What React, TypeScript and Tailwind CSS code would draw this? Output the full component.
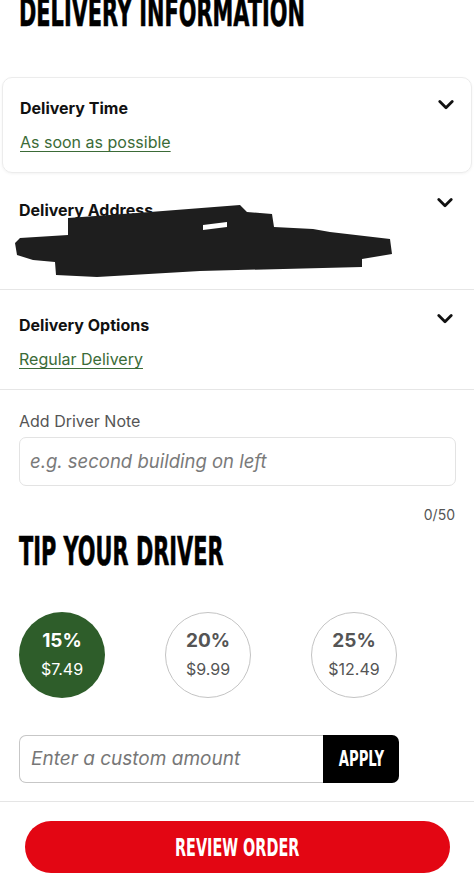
import React from "react";

const condensed = "font-['Liberation_Sans_Narrow','DejaVu_Sans_Condensed','Arial_Narrow',sans-serif]";

function Chevron() {
  return (
    <svg width="16" height="16" viewBox="0 0 16 16" className="shrink-0">
      <path d="M1.8 4.6 L8 10.8 L14.2 4.6" fill="none" stroke="#111" strokeWidth="2.8" strokeLinecap="round" strokeLinejoin="round" />
    </svg>
  );
}

function Tip({ pct, amt, active }: { pct: string; amt: string; active?: boolean }) {
  return (
    <div
      className={
        "w-[86px] h-[86px] rounded-full flex flex-col items-center justify-center gap-[4px] " +
        (active ? "bg-[#2e5d2a] text-white" : "border border-[#c4c4c4] text-[#555]")
      }
    >
      <div className="text-[19px] leading-[24px] font-bold">{pct}</div>
      <div className="text-[16px] leading-[24px]">{amt}</div>
    </div>
  );
}

export default function App() {
  return (
    <div className="w-[474px] h-[874px] overflow-hidden bg-white text-[#111] font-['Inter',sans-serif]">
      <h1 className={`${condensed} px-[19px] mt-[-7px] text-[39px] leading-[39px] font-bold text-black whitespace-nowrap [-webkit-text-stroke:0.6px_black]`}>
        <span className="inline-block origin-left scale-x-[0.595]">DELIVERY INFORMATION</span>
      </h1>

      <div className="mt-[45px] mx-[2px] rounded-[10px] border border-[#ececec] shadow-[0_1px_3px_rgba(0,0,0,0.05)] px-[17px] pt-[18px] pb-[18px]">
        <div className="flex justify-between items-start">
          <div className="text-[16px] leading-[24px] font-bold">Delivery Time</div>
          <div className="mt-[1px]"><Chevron /></div>
        </div>
        <div className="mt-[10px] text-[16px] leading-[24px] text-[#3b6b37] underline underline-offset-[3px]">As soon as possible</div>
      </div>

      <div className="relative px-[19px] pt-[25px] border-b border-[#e6e6e6]">
        <div className="flex justify-between items-start">
          <div className="text-[16px] leading-[24px] font-bold">Delivery Address</div>
          <div className="mt-[-3px] mr-[2px]"><Chevron /></div>
        </div>
        <div className="h-[67px]" />
        <svg className="absolute left-0 top-0" width="474" height="117" viewBox="0 173 474 117">
          <path
            d="M68 218 L150 212 L240 205 L247 212 L272 214 L274 227 L313 229 L330 232 L390 239 L392 254 L362 259 L362 267 L200 271 L97 277 L56 275 L55 262 L33 260 L17 255 L15 243 L20 238 L68 235 Z"
            fill="#1e1e1e"
          />
          <path d="M203 225 L227 222 L227 227 L203 230 Z" fill="#fff" />
        </svg>
      </div>

      <div className="px-[19px] pt-[23px] pb-[18px] border-b border-[#e6e6e6]">
        <div className="flex justify-between items-start">
          <div className="text-[16px] leading-[24px] font-bold">Delivery Options</div>
          <div className="mt-[-2px] mr-[2px]"><Chevron /></div>
        </div>
        <div className="mt-[10px] text-[16px] leading-[24px] text-[#3b6b37] underline underline-offset-[3px]">Regular Delivery</div>
      </div>

      <div className="px-[19px] mt-[19px] text-[16px] leading-[24px] text-[#555]">Add Driver Note</div>
      <div className="mx-[19px] mt-[4px] h-[49px] w-[437px] rounded-[7px] border border-[#e3e3e3] flex items-center pl-[10px]">
        <span className="italic text-[18.5px] text-[#7a7a7a]">e.g. second building on left</span>
      </div>
      <div className="mt-[19px] pr-[19px] text-right text-[14px] leading-[20px] text-[#555]">0/50</div>

      <h2 className={`${condensed} px-[19px] mt-[7px] text-[39px] leading-[39px] font-bold text-black whitespace-nowrap [-webkit-text-stroke:0.6px_black]`}>
        <span className="inline-block origin-left scale-x-[0.595]">TIP YOUR DRIVER</span>
      </h2>

      <div className="mt-[41px] px-[19px] flex gap-[60px]">
        <Tip pct="15%" amt="$7.49" active />
        <Tip pct="20%" amt="$9.99" />
        <Tip pct="25%" amt="$12.49" />
      </div>

      <div className="mt-[37px] ml-[19px] w-[380px] h-[48px] flex">
        <div className="flex-1 flex items-center pl-[11px] border border-r-0 border-[#c7c7c7] rounded-l-[7px]">
          <span className="italic text-[19px] text-[#777]">Enter a custom amount</span>
        </div>
        <div className="w-[76px] bg-black rounded-r-[7px] flex items-center justify-center">
          <span className={`${condensed} inline-block scale-x-[0.7] text-white font-bold text-[21px] leading-none`}>APPLY</span>
        </div>
      </div>

      <div className="mt-[18px] h-px bg-[#e5e5e5]" />

      <div className="mt-[19px] ml-[25px] w-[425px] h-[52px] rounded-full bg-[#e30613] flex items-center justify-center">
        <span className={`${condensed} inline-block scale-x-[0.64] text-white font-bold text-[25px] leading-none`}>REVIEW ORDER</span>
      </div>
    </div>
  );
}
